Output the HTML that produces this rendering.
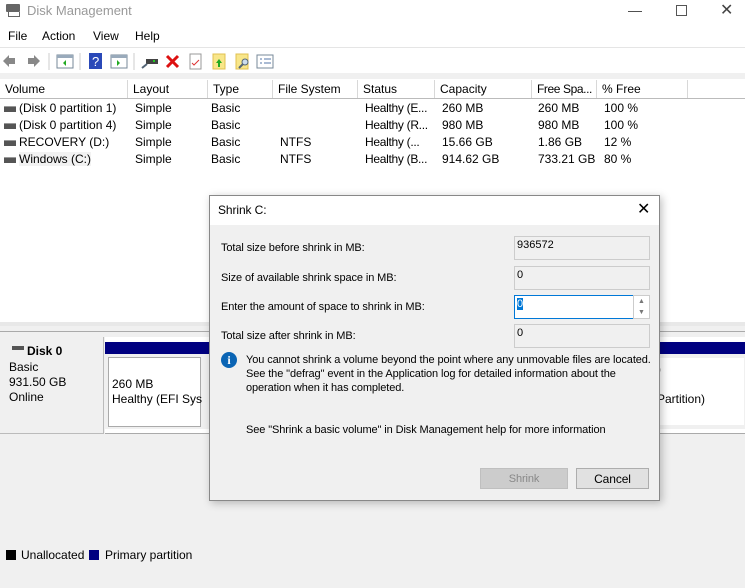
<!DOCTYPE html><html><head><style>
body{margin:0;width:745px;height:588px;overflow:hidden;background:#fff;font-family:"Liberation Sans",sans-serif;font-size:12px;color:#000;position:relative}
.a{position:absolute;white-space:nowrap}
.d{font-size:11px;letter-spacing:-0.1px}
.hd{position:absolute;top:80px;height:18px;border-right:1px solid #d8d8d8;line-height:18px;padding-left:5px;box-sizing:border-box;background:#fff;white-space:nowrap;overflow:hidden}
.fld{position:absolute;left:514px;width:136px;height:24px;border:1px solid #ccc;box-sizing:border-box;background:#f0f0f0;padding:2px 2px;font-size:11px}
.ico{display:inline-block;width:12px;height:5px;background:#555;border-top:1px solid #999;vertical-align:middle;margin-right:3px}
</style></head><body>
<div class="a" style="left:6px;top:4px;width:14px;height:8px;background:#666;border-radius:1px"></div>
<div class="a" style="left:8px;top:12px;width:10px;height:4px;border:1px solid #666;border-top:none"></div>
<div class="a" style="left:27px;top:3px;font-size:13px;color:#999">Disk Management</div>
<div class="a" style="left:628px;top:2px;font-size:14px;color:#444">&#8212;</div>
<div class="a" style="left:676px;top:5px;width:9px;height:9px;border:1px solid #555"></div>
<div class="a" style="left:720px;top:0px;font-size:16px;color:#444">&#x2715;</div>
<div class="a" style="left:8px;top:29px">File</div><div class="a" style="left:42px;top:29px">Action</div><div class="a" style="left:93px;top:29px">View</div><div class="a" style="left:135px;top:29px">Help</div>
<div class="a" style="left:0;top:47px;width:745px;height:1px;background:#e5e5e5"></div>
<svg class="a" style="left:0;top:50px" width="280" height="22">
<path d="M3 11 L9 5 V8 H15 V14 H9 V17Z" fill="#888"/><path d="M40 11 L34 5 V8 H28 V14 H34 V17Z" fill="#888"/>
<line x1="49" y1="3" x2="49" y2="20" stroke="#ccc"/>
<rect x="57" y="5" width="16" height="13" fill="#fff" stroke="#789"/><rect x="57" y="5" width="16" height="3" fill="#9ab"/><path d="M66 10 l-3 3 l3 3z" fill="#2a2"/>
<line x1="80" y1="3" x2="80" y2="20" stroke="#ccc"/>
<rect x="89" y="3" width="13" height="16" fill="#2a49b8"/><text x="92" y="16" fill="#fff" font-size="13" font-family="Liberation Sans">?</text>
<rect x="111" y="5" width="16" height="13" fill="#fff" stroke="#789"/><rect x="111" y="5" width="16" height="3" fill="#9ab"/><path d="M117 10 l3 3 l-3 3z" fill="#2a2"/>
<line x1="134" y1="3" x2="134" y2="20" stroke="#ccc"/>
<rect x="146" y="9" width="12" height="5" fill="#444"/><rect x="153" y="10" width="2" height="2" fill="#2c2"/><line x1="147" y1="14" x2="142" y2="18" stroke="#567" stroke-width="2"/>
<path d="M167 6 L178 17 M178 6 L167 17" stroke="#d11" stroke-width="3"/>
<rect x="190" y="4" width="11" height="15" fill="#fff" stroke="#999"/><path d="M192 13 l2 2 l5 -5" stroke="#d33" fill="none"/>
<rect x="213" y="4" width="12" height="15" fill="#f8e68a" stroke="#e0c050"/><path d="M219 9 l-3 4 h2 v4 h2 v-4 h2z" fill="#2a2"/>
<rect x="236" y="4" width="12" height="15" fill="#f8e68a" stroke="#e0c050"/><circle cx="245" cy="12" r="3" fill="#cde" stroke="#567"/><line x1="243" y1="14" x2="239" y2="18" stroke="#567" stroke-width="2"/>
<rect x="257" y="5" width="16" height="13" fill="#fff" stroke="#789"/><path d="M260 9h2M260 13h2M264 9h7M264 13h7" stroke="#57a"/>
</svg>
<div class="a" style="left:0;top:73px;width:745px;height:6px;background:#f0f0f0"></div>
<div class="a" style="left:0;top:98px;width:745px;height:1px;background:#bbb"></div>
<div class="hd" style="left:0;width:128px">Volume</div><div class="hd" style="left:128px;width:80px">Layout</div><div class="hd" style="left:208px;width:65px">Type</div><div class="hd" style="left:273px;width:85px">File System</div><div class="hd" style="left:358px;width:77px">Status</div><div class="hd" style="left:435px;width:97px">Capacity</div><div class="hd" style="left:532px;width:65px;letter-spacing:-0.4px">Free Spa...</div><div class="hd" style="left:597px;width:91px">% Free</div>
<div class="a" style="top:100px;left:4px;line-height:17px">
<div><span class="ico"></span>(Disk 0 partition 1)</div><div><span class="ico"></span>(Disk 0 partition 4)</div><div><span class="ico"></span>RECOVERY (D:)</div><div><span class="ico"></span><span style="background:#f2f2f2">Windows (C:)</span></div></div>
<div class="a" style="top:100px;left:135px;line-height:17px">Simple<br>Simple<br>Simple<br>Simple</div>
<div class="a" style="top:100px;left:211px;line-height:17px">Basic<br>Basic<br>Basic<br>Basic</div>
<div class="a" style="top:100px;left:280px;line-height:17px"><br><br>NTFS<br>NTFS</div>
<div class="a" style="top:100px;left:365px;line-height:17px;letter-spacing:-0.3px">Healthy (E...<br>Healthy (R...<br>Healthy (...<br>Healthy (B...</div>
<div class="a" style="top:100px;left:442px;line-height:17px">260 MB<br>980 MB<br>15.66 GB<br>914.62 GB</div>
<div class="a" style="top:100px;left:538px;line-height:17px">260 MB<br>980 MB<br>1.86 GB<br>733.21 GB</div>
<div class="a" style="top:100px;left:604px;line-height:17px">100 %<br>100 %<br>12 %<br>80 %</div>
<div class="a" style="left:0;top:322px;width:745px;height:4px;background:#e8e8e8"></div>
<div class="a" style="left:0;top:326px;width:745px;height:262px;background:#f0f0f0"></div>
<div class="a" style="left:0;top:331px;width:745px;height:1px;background:#aaa"></div>
<div class="a" style="left:0;top:337px;width:103px;height:96px;background:#f0f0f0;border-right:1px solid #bbb;border-bottom:1px solid #bbb"></div>
<div class="a" style="left:12px;top:346px;width:12px;height:4px;background:#555"></div>
<div class="a" style="left:27px;top:344px;font-weight:bold">Disk 0</div>
<div class="a" style="left:9px;top:360px;line-height:15px">Basic<br>931.50 GB<br>Online</div>
<div class="a" style="left:105px;top:337px;width:640px;height:96px;background:#fff"></div>
<div class="a" style="left:105px;top:342px;width:640px;height:12px;background:#000080"></div>
<div class="a" style="left:105px;top:354px;width:640px;height:75px;background:#f0f0f0"></div>
<div class="a" style="left:108px;top:357px;width:91px;height:68px;background:#fff;border:1px solid #aaa"></div>
<div class="a" style="left:204px;top:354px;width:2px;height:75px;background:#f0f0f0"></div>
<div class="a" style="left:660px;top:358px;width:84px;height:67px;background:#fff"></div>
<div class="a" style="left:112px;top:377px;line-height:15px">260 MB<br>Healthy (EFI Sys</div>
<div class="a" style="left:657px;top:362px;line-height:15px">)<br><br>Partition)</div>
<div class="a" style="left:105px;top:433px;width:640px;height:1px;background:#aaa"></div>
<div class="a" style="left:6px;top:550px;width:10px;height:10px;background:#000"></div>
<div class="a" style="left:21px;top:548px">Unallocated</div>
<div class="a" style="left:89px;top:550px;width:10px;height:10px;background:#000080"></div>
<div class="a" style="left:105px;top:548px">Primary partition</div>
<div class="a" style="left:209px;top:195px;width:451px;height:306px;background:#f0f0f0;border:1px solid #888;box-sizing:border-box;box-shadow:2px 2px 8px rgba(0,0,0,.25)"></div>
<div class="a" style="left:210px;top:196px;width:449px;height:29px;background:#fff"></div>
<div class="a d" style="left:218px;top:203px;font-size:12px">Shrink C:</div>
<div class="a" style="left:637px;top:199px;font-size:16px">&#x2715;</div>
<div class="a d" style="left:221px;top:242px">Total size before shrink in MB:</div>
<div class="a d" style="left:221px;top:272px">Size of available shrink space in MB:</div>
<div class="a d" style="left:221px;top:301px">Enter the amount of space to shrink in MB:</div>
<div class="a d" style="left:221px;top:330px">Total size after shrink in MB:</div>
<div class="fld" style="top:236px">936572</div>
<div class="fld" style="top:266px">0</div>
<div class="fld" style="top:295px;background:#fff;border-color:#0078d7;width:120px"><span style="background:#0078d7;color:#fff">0</span></div>
<div class="a" style="left:633px;top:295px;width:17px;height:24px;border:1px solid #ccc;box-sizing:border-box;background:#fff;font-size:7px;color:#777;text-align:center;line-height:11px">&#9650;<br>&#9660;</div>
<div class="fld" style="top:324px">0</div>
<div class="a" style="left:221px;top:352px;width:16px;height:16px;border-radius:50%;background:#0a64b4;color:#fff;font-weight:bold;text-align:center;line-height:16px;font-size:12px;font-family:'Liberation Serif',serif">i</div>
<div class="a d" style="left:246px;top:353px;line-height:14px">You cannot shrink a volume beyond the point where any unmovable files are located.<br>See the "defrag" event in the Application log for detailed information about the<br>operation when it has completed.</div>
<div class="a d" style="left:246px;top:424px">See "Shrink a basic volume" in Disk Management help for more information</div>
<div class="a d" style="left:480px;top:468px;width:88px;height:21px;border:1px solid #bfbfbf;background:#ccc;color:#888;text-align:center;line-height:20px;box-sizing:border-box">Shrink</div>
<div class="a d" style="left:576px;top:468px;width:73px;height:21px;border:1px solid #adadad;background:#e1e1e1;text-align:center;line-height:20px;box-sizing:border-box;font-size:12px">Cancel</div>
</body></html>
